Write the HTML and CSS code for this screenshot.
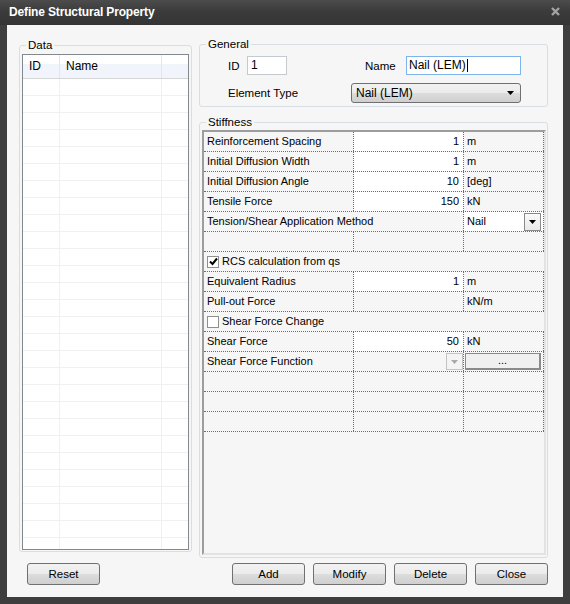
FILE: index.html
```html
<!DOCTYPE html>
<html>
<head>
<meta charset="utf-8">
    <title>Define Structural Property</title>
    <link rel="stylesheet" href="styles.css">
</head>
<body>
<div class="window">
    <div class="titlebar">
        <span class="title">Define Structural Property</span>
        <svg class="close" width="9" height="9" viewBox="0 0 9 9">
            <path d="M1 1 L8 8 M8 1 L1 8" stroke="#a3a3a3" stroke-width="2.4" fill="none"/>
        </svg>
    </div>

    <div class="client">
        <div class="panes">
            <fieldset class="group data">
                <legend>Data</legend>
                <div class="listview">
                    <div class="lv-head">
                        <div class="lv-col c-id">ID</div>
                        <div class="lv-col c-name">Name</div>
                        <div class="lv-col c-rest"></div>
                    </div>
                    <div class="lv-body">
                        <div class="lv-col c-id"></div>
                        <div class="lv-col c-name"></div>
                        <div class="lv-col c-rest"></div>
                    </div>
                </div>
            </fieldset>

            <div class="right">
                <fieldset class="group general">
                    <legend>General</legend>
                    <div class="gen-row">
                        <span class="lbl lbl-id">ID</span>
                        <div class="textbox tb-id">1</div>
                        <span class="lbl lbl-name">Name</span>
                        <div class="textbox tb-name focused">Nail (LEM)<span class="caret"></span></div>
                    </div>
                    <div class="gen-row row2">
                        <span class="lbl lbl-type">Element Type</span>
                        <div class="combo">
                            <span>Nail (LEM)</span>
                            <svg width="7" height="4" viewBox="0 0 7 4"><path d="M0 0 H7 L3.5 4 Z" fill="#000"/></svg>
                        </div>
                    </div>
                </fieldset>

                <fieldset class="group stiffness">
                    <legend>Stiffness</legend>
                    <div class="propgrid">
                        <div class="prow">
                            <div class="cell">Reinforcement Spacing</div>
                            <div class="cell val">1</div>
                            <div class="cell">m</div>
                        </div>
                        <div class="prow">
                            <div class="cell">Initial Diffusion Width</div>
                            <div class="cell val">1</div>
                            <div class="cell">m</div>
                        </div>
                        <div class="prow">
                            <div class="cell">Initial Diffusion Angle</div>
                            <div class="cell val">10</div>
                            <div class="cell">[deg]</div>
                        </div>
                        <div class="prow">
                            <div class="cell">Tensile Force</div>
                            <div class="cell val">150</div>
                            <div class="cell">kN</div>
                        </div>
                        <div class="prow">
                            <div class="cell span2">Tension/Shear Application Method</div>
                            <div class="cell pick">
                                <span>Nail</span>
                                <div class="dropbtn">
                                    <svg width="7" height="4" viewBox="0 0 7 4"><path d="M0 0 H7 L3.5 4 Z" fill="#000"/></svg>
                                </div>
                            </div>
                        </div>
                        <div class="prow">
                            <div class="cell"></div>
                            <div class="cell"></div>
                            <div class="cell"></div>
                        </div>
                        <div class="prow">
                            <div class="cell span3 check-cell">
                                <span class="checkbox">
                                    <svg width="9" height="9" viewBox="0 0 9 9"><path d="M1 4.5 L3.5 7 L8 1.5" stroke="#000" stroke-width="2" fill="none"/></svg>
                                </span>
                                RCS calculation from qs
                            </div>
                        </div>
                        <div class="prow">
                            <div class="cell">Equivalent Radius</div>
                            <div class="cell val">1</div>
                            <div class="cell">m</div>
                        </div>
                        <div class="prow">
                            <div class="cell">Pull-out Force</div>
                            <div class="cell"></div>
                            <div class="cell">kN/m</div>
                        </div>
                        <div class="prow">
                            <div class="cell span3 check-cell">
                                <span class="checkbox"></span>
                                Shear Force Change
                            </div>
                        </div>
                        <div class="prow">
                            <div class="cell">Shear Force</div>
                            <div class="cell val">50</div>
                            <div class="cell">kN</div>
                        </div>
                        <div class="prow">
                            <div class="cell">Shear Force Function</div>
                            <div class="cell end">
                                <div class="dropbtn disabled">
                                    <svg width="7" height="4" viewBox="0 0 7 4"><path d="M0 0 H7 L3.5 4 Z" fill="#a9a9a9"/></svg>
                                </div>
                            </div>
                            <div class="cell">
                                <div class="ellipsis">...</div>
                            </div>
                        </div>
                        <div class="prow">
                            <div class="cell"></div>
                            <div class="cell"></div>
                            <div class="cell"></div>
                        </div>
                        <div class="prow">
                            <div class="cell"></div>
                            <div class="cell"></div>
                            <div class="cell"></div>
                        </div>
                        <div class="prow">
                            <div class="cell"></div>
                            <div class="cell"></div>
                            <div class="cell"></div>
                        </div>
                    </div>
                </fieldset>
            </div>
        </div>

        <div class="buttons">
            <button type="button" class="btn">Reset</button>
            <div class="btn-group">
                <button type="button" class="btn">Add</button>
                <button type="button" class="btn">Modify</button>
                <button type="button" class="btn">Delete</button>
                <button type="button" class="btn">Close</button>
            </div>
        </div>
    </div>
</div>
</body>
</html>
```

FILE: styles.css
```css
body {
    margin: 0;
    background: #3d3d3d;
    font-family: "Liberation Sans", Arial, sans-serif;
    font-size: 11px;
    color: #000;
}
.window {
    width: 570px;
    height: 604px;
    background: #3e3e3e;
    display: flex;
    flex-direction: column;
}
.titlebar {
    height: 25px;
    box-sizing: border-box;
    padding: 0 10px 2px 9px;
    display: flex;
    align-items: center;
    justify-content: space-between;
    background: linear-gradient(#4c4c4c, #3b3b3b 45%, #343434);
}
.title {
    color: #fff;
    font-weight: bold;
    font-size: 12px;
    letter-spacing: -0.15px;
}
.client {
    margin: 0 7px;
    height: 572px;
    box-sizing: border-box;
    padding: 12px 15px 0 12px;
    background: #f6f6f6;
}
.panes {
    display: flex;
    gap: 7px;
    align-items: flex-start;
}

/* group boxes */
.group {
    margin: 0;
    min-width: 0;
    box-sizing: border-box;
    border: 1px solid #d5dfe5;
    border-radius: 3px;
}
.group legend {
    margin-left: 4px;
    padding: 0 2px;
    font-size: 11.5px;
    line-height: 14px;
}
.data {
    width: 173px;
    height: 514px;
    margin-top: 1px;
    padding: 2px 2px 1px 2px;
}
.right {
    width: 349px;
    display: flex;
    flex-direction: column;
    gap: 8px;
}
.general {
    height: 70px;
    padding: 5px 0 0 2px;
}
.stiffness {
    height: 443px;
    padding: 1px 1px 2px 2px;
}

/* list view */
.listview {
    height: 496px;
    box-sizing: border-box;
    border: 1px solid #828790;
    background: #fff;
    display: flex;
    flex-direction: column;
}
.lv-head {
    height: 24px;
    display: flex;
    border-bottom: 1px solid #d5d5d5;
    box-sizing: border-box;
    background: linear-gradient(#fff 0, #fff 40%, #f1f4fa 40%, #f1f4fa);
}
.lv-head .lv-col {
    line-height: 23px;
    padding-left: 6px;
    font-size: 12px;
    border-right: 1px solid #e3e5ea;
}
.lv-body {
    flex: 1;
    display: flex;
    background: repeating-linear-gradient(to bottom, transparent 0, transparent 16px, #f0f0f0 16px, #f0f0f0 17px);
}
.lv-body .lv-col {
    border-right: 1px solid #f0f0f0;
}
.lv-col {
    box-sizing: border-box;
}
.c-id {
    width: 37px;
}
.c-name {
    width: 102px;
}
.lv-head .c-rest,
.lv-body .c-rest {
    flex: 1;
    border-right: none;
}

/* general */
.gen-row {
    display: flex;
    align-items: center;
    margin-left: 26px;
    height: 19px;
}
.gen-row.row2 {
    margin-top: 8px;
    height: 20px;
}
.lbl {
    font-size: 11.5px;
}
.lbl-id {
    width: 19px;
}
.lbl-name {
    width: 41px;
    margin-left: 78px;
}
.lbl-type {
    width: 123px;
}
.textbox {
    height: 19px;
    box-sizing: border-box;
    border: 1px solid #c5c9d0;
    background: #fff;
    padding-left: 3px;
    line-height: 17px;
    font-size: 12px;
    display: flex;
    align-items: center;
}
.tb-id {
    width: 40px;
}
.tb-name {
    width: 115px;
    padding-left: 2px;
}
.textbox.focused {
    border-color: #7eb4ea;
}
.caret {
    width: 1px;
    height: 13px;
    background: #000;
    margin-left: 1px;
}
.combo {
    width: 170px;
    height: 20px;
    box-sizing: border-box;
    border: 1px solid #707070;
    border-radius: 3px;
    padding: 0 6px 0 4px;
    display: flex;
    align-items: center;
    justify-content: space-between;
    font-size: 12px;
    background: linear-gradient(#f2f2f2 0, #ebebeb 50%, #dddddd 50%, #cfcfcf);
}

/* property grid */
.propgrid {
    width: 344px;
    height: 425px;
    box-sizing: border-box;
    border: 2px solid;
    border-color: #9d9d9d #e3e3e3 #e3e3e3 #9d9d9d;
    background: #f6f6f6;
}
.prow {
    display: grid;
    grid-template-columns: 150px 110px 80px;
    height: 20px;
    box-sizing: border-box;
    border-bottom: 1px dotted #6e6e6e;
}
.cell {
    box-sizing: border-box;
    border-right: 1px dotted #6e6e6e;
    padding: 0 3px;
    line-height: 19px;
    white-space: nowrap;
    overflow: hidden;
}
.cell.val {
    background: #fff;
    text-align: right;
    padding-right: 4px;
}
.span2 {
    grid-column: span 2;
}
.span3 {
    grid-column: span 3;
    border-right: none;
}
.pick {
    background: #fff;
    display: flex;
    align-items: center;
    justify-content: space-between;
    padding-right: 2px;
}
.end {
    display: flex;
    align-items: center;
    justify-content: flex-end;
    padding-right: 0;
}
.dropbtn {
    width: 17px;
    height: 18px;
    box-sizing: border-box;
    border: 1px solid #8a8a8a;
    background: linear-gradient(#fafafa, #e9e9e9);
    display: flex;
    align-items: center;
    justify-content: center;
}
.dropbtn.disabled {
    height: 17px;
    border-color: #c4c4c4;
    background: #f4f4f4;
}
.ellipsis {
    margin: 1px 0 0 -2px;
    width: 76px;
    height: 17px;
    box-sizing: border-box;
    border: 1px solid #8a8a8a;
    border-right-width: 2px;
    border-bottom-width: 2px;
    background: #f0f0f0;
    text-align: center;
    line-height: 12px;
}
.check-cell {
    display: flex;
    align-items: center;
    gap: 3px;
}
.checkbox {
    width: 12px;
    height: 12px;
    box-sizing: border-box;
    border: 1px solid #8e8f8f;
    background: #fff;
    display: flex;
    align-items: center;
    justify-content: center;
}

/* buttons */
.buttons {
    margin-top: 5px;
    display: flex;
    padding-left: 8px;
}
.btn-group {
    margin-left: auto;
    display: flex;
    gap: 8px;
}
.btn {
    width: 73px;
    height: 22px;
    padding: 0;
    border: 1px solid #707070;
    border-radius: 3px;
    font-family: "Liberation Sans", Arial, sans-serif;
    font-size: 11.5px;
    color: #000;
    background: linear-gradient(#f2f2f2 0, #ebebeb 50%, #dddddd 50%, #cfcfcf);
}
```
